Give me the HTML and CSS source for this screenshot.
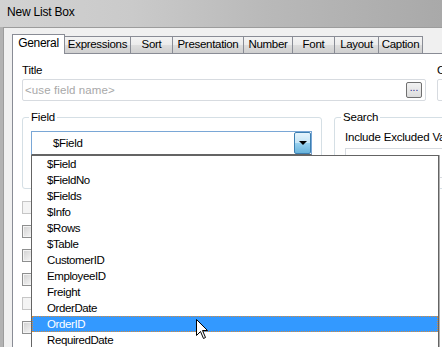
FILE: index.html
```html
<!DOCTYPE html>
<html>
<head>
<meta charset="utf-8">
<link rel="stylesheet" href="styles.css">
</head>
<body>
<div class="window">
  <div class="titlebar">New List Box</div>
  <div class="frame">
    <div class="client">
      <div class="tabs">
        <div class="tab active">General</div>
        <div class="tab">Expressions</div>
        <div class="tab">Sort</div>
        <div class="tab">Presentation</div>
        <div class="tab">Number</div>
        <div class="tab">Font</div>
        <div class="tab">Layout</div>
        <div class="tab">Caption</div>
      </div>
      <div class="panel">
        <div class="top-row">
          <div class="title-col">
            <div class="label">Title</div>
            <div class="input">
              <span class="placeholder">&lt;use field name&gt;</span>
              <span class="dots">...</span>
            </div>
          </div>
          <div class="cap-col">
            <div class="label">Caption</div>
            <div class="input"></div>
          </div>
        </div>
        <div class="groups">
          <fieldset class="group field-group">
            <legend>Field</legend>
            <div class="combo">
              <span class="combo-text">$Field</span>
              <span class="combo-btn"><span class="tri"></span></span>
            </div>
          </fieldset>
          <fieldset class="group search-group">
            <legend>Search</legend>
            <div class="search-label">Include Excluded Values</div>
            <div class="search-box"></div>
          </fieldset>
        </div>
        <div class="checks">
          <span class="chk light"></span>
          <span class="chk"></span>
          <span class="chk"></span>
          <span class="chk"></span>
          <span class="chk light"></span>
          <span class="chk"></span>
        </div>
      </div>
    </div>
  </div>
  <div class="dropdown">
    <div class="item">$Field</div>
    <div class="item">$FieldNo</div>
    <div class="item">$Fields</div>
    <div class="item">$Info</div>
    <div class="item">$Rows</div>
    <div class="item">$Table</div>
    <div class="item">CustomerID</div>
    <div class="item">EmployeeID</div>
    <div class="item">Freight</div>
    <div class="item">OrderDate</div>
    <div class="item selected">OrderID</div>
    <div class="item">RequiredDate</div>
  </div>
  <svg class="cursor" width="13" height="21" viewBox="0 0 13 21">
    <path d="M0.5 0.5 L0.5 16.5 L4.5 12.5 L7.5 19.5 L9.5 18.5 L6.5 11.5 L11.5 11.5 Z" fill="#fff" stroke="#000" stroke-width="1" stroke-linejoin="miter"/>
  </svg>
</div>
</body>
</html>
```

FILE: styles.css
```css
* { box-sizing: border-box; }
html, body { margin: 0; padding: 0; }
body {
  width: 442px;
  height: 347px;
  overflow: hidden;
  font-family: "Liberation Sans", Arial, sans-serif;
  font-size: 11px;
  color: #000;
}
.window {
  position: relative;
  width: 442px;
  height: 347px;
  overflow: hidden;
  display: flex;
  flex-direction: column;
  background: linear-gradient(to right, #bdbdbd, #b0b0b0);
}
.titlebar {
  height: 27px;
  flex: none;
  line-height: 25px;
  padding-left: 7px;
  font-size: 12px;
  letter-spacing: -0.2px;
  color: #000;
  background: linear-gradient(to right, #d2d2d2 0%, #cacaca 30%, #b9b9b9 60%, #a9a9a9 100%);
}
.frame {
  flex: 1;
  display: flex;
  padding-left: 3px;
  background: #b2b2b2;
}
.client {
  flex: 1;
  background: #f0f0f0;
  border-left: 1px solid #9c9c9c;
  border-top: 1px solid #9c9c9c;
  padding: 6px 0 0 8px;
  display: flex;
  flex-direction: column;
  min-width: 0;
}
.tabs {
  display: flex;
  align-items: flex-end;
  height: 19px;
  flex: none;
  position: relative;
  z-index: 1;
}
.tab {
  height: 17px;
  line-height: 15px;
  text-align: center;
  font-size: 11.5px;
  letter-spacing: -0.3px;
  border: 1px solid #898c95;
  border-bottom: none;
  margin-right: -1px;
  background: linear-gradient(to bottom, #f3f3f3 0%, #ebebeb 50%, #dddddd 51%, #cfcfcf 100%);
}
.tab:nth-child(1) { width: 53px; }
.tab:nth-child(2) { width: 67px; }
.tab:nth-child(3) { width: 43px; }
.tab:nth-child(4) { width: 72px; }
.tab:nth-child(5) { width: 50px; }
.tab:nth-child(6) { width: 43px; }
.tab:nth-child(7) { width: 45px; }
.tab:nth-child(8) { width: 45px; }
.tab.active {
  height: 20px;
  line-height: 17px;
  background: #fff;
  margin-bottom: -1px;
  font-size: 12px;
}
.panel {
  flex: 1;
  width: 460px;
  background: #fff;
  border-left: 1px solid #898c95;
  border-top: 1px solid #898c95;
  padding: 9px 0 0 9px;
}
.top-row {
  display: flex;
  gap: 11px;
}
.label {
  height: 14px;
  line-height: 14px;
  margin-bottom: 2px;
  font-size: 11.5px;
  letter-spacing: -0.2px;
}
.title-col { width: 404px; flex: none; }
.cap-col { width: 60px; flex: none; }
.input {
  height: 22px;
  border: 1px solid #d7dbe0;
  border-radius: 2px;
  display: flex;
  align-items: center;
  justify-content: space-between;
  padding: 0 3px 0 2px;
  background: #fff;
}
.placeholder {
  color: #a8a8a8;
  font-size: 11.5px;
  letter-spacing: 0.1px;
}
.dots {
  width: 16px;
  height: 16px;
  border: 1px solid #707070;
  border-radius: 2px;
  background: linear-gradient(to bottom, #f2f2f2, #dcdcdc);
  font-size: 10px;
  line-height: 10px;
  text-align: center;
  color: #1a1a8a;
}
.groups {
  display: flex;
  gap: 12px;
  margin-top: 9px;
}
.group {
  margin: 0;
  border: 1px solid #d5dfe5;
  border-radius: 3px;
  min-width: 0;
}
.group legend {
  padding: 0 2px;
  line-height: 14px;
  height: 14px;
  font-size: 11.5px;
  letter-spacing: -0.2px;
}
.field-group {
  width: 300px;
  flex: none;
  padding: 7px 8px 33px 8px;
}
.field-group legend { margin-left: -2px; }
.search-group {
  width: 200px;
  flex: none;
  padding: 6px 0 0 10px;
}
.search-group legend { margin-left: -4px; }
.search-label {
  height: 14px;
  line-height: 14px;
  letter-spacing: -0.2px;
  white-space: nowrap;
  font-size: 11.5px;
}
.search-box {
  margin-top: 4px;
  height: 30px;
  border: 1px solid #d7dbe0;
  border-right: none;
}
.combo {
  width: 281px;
  height: 24px;
  border: 1px solid #7aa7d6;
  border-bottom-color: #646464;
  display: flex;
  align-items: center;
  justify-content: space-between;
  padding: 0 0 0 21px;
  background: #fff;
}
.combo-text { letter-spacing: -0.3px; font-size: 11.5px; }
.combo-btn {
  width: 17px;
  height: 22px;
  border: 1px solid #3c7fb1;
  border-radius: 2px;
  background: linear-gradient(to bottom, #e5f4fc 0%, #c4e5f6 50%, #98d1ef 51%, #68b3db 100%);
  display: flex;
  align-items: center;
  justify-content: center;
}
.tri {
  width: 0;
  height: 0;
  border-left: 4px solid transparent;
  border-right: 4px solid transparent;
  border-top: 4px solid #000;
}
.checks {
  display: flex;
  flex-direction: column;
  gap: 11px;
  margin-top: 12px;
}
.chk {
  width: 13px;
  height: 13px;
  border: 1px solid #8e8f8f;
  background: linear-gradient(135deg, #d0d0d0, #fbfbfb);
  box-shadow: inset 0 0 0 1px #f4f4f4;
}
.chk.light {
  border-color: #c6c6c6;
  background: #f4f4f4;
  box-shadow: none;
}
.dropdown {
  position: absolute;
  left: 31px;
  top: 155px;
  width: 408px;
  height: 194px;
  background: #fff;
  border: 1px solid #646464;
  box-shadow: 1px 0 0 #b0b0b0;
  z-index: 5;
}
.item {
  height: 16px;
  line-height: 16px;
  padding-left: 15px;
  font-size: 11.5px;
  letter-spacing: -0.4px;
  color: #000;
}
.item.selected {
  background: #3399ff;
  color: #fff;
  border: 1px dotted #d68a3a;
  line-height: 14px;
  padding-left: 14px;
}
.cursor {
  position: absolute;
  left: 196px;
  top: 319px;
  z-index: 10;
}
```
